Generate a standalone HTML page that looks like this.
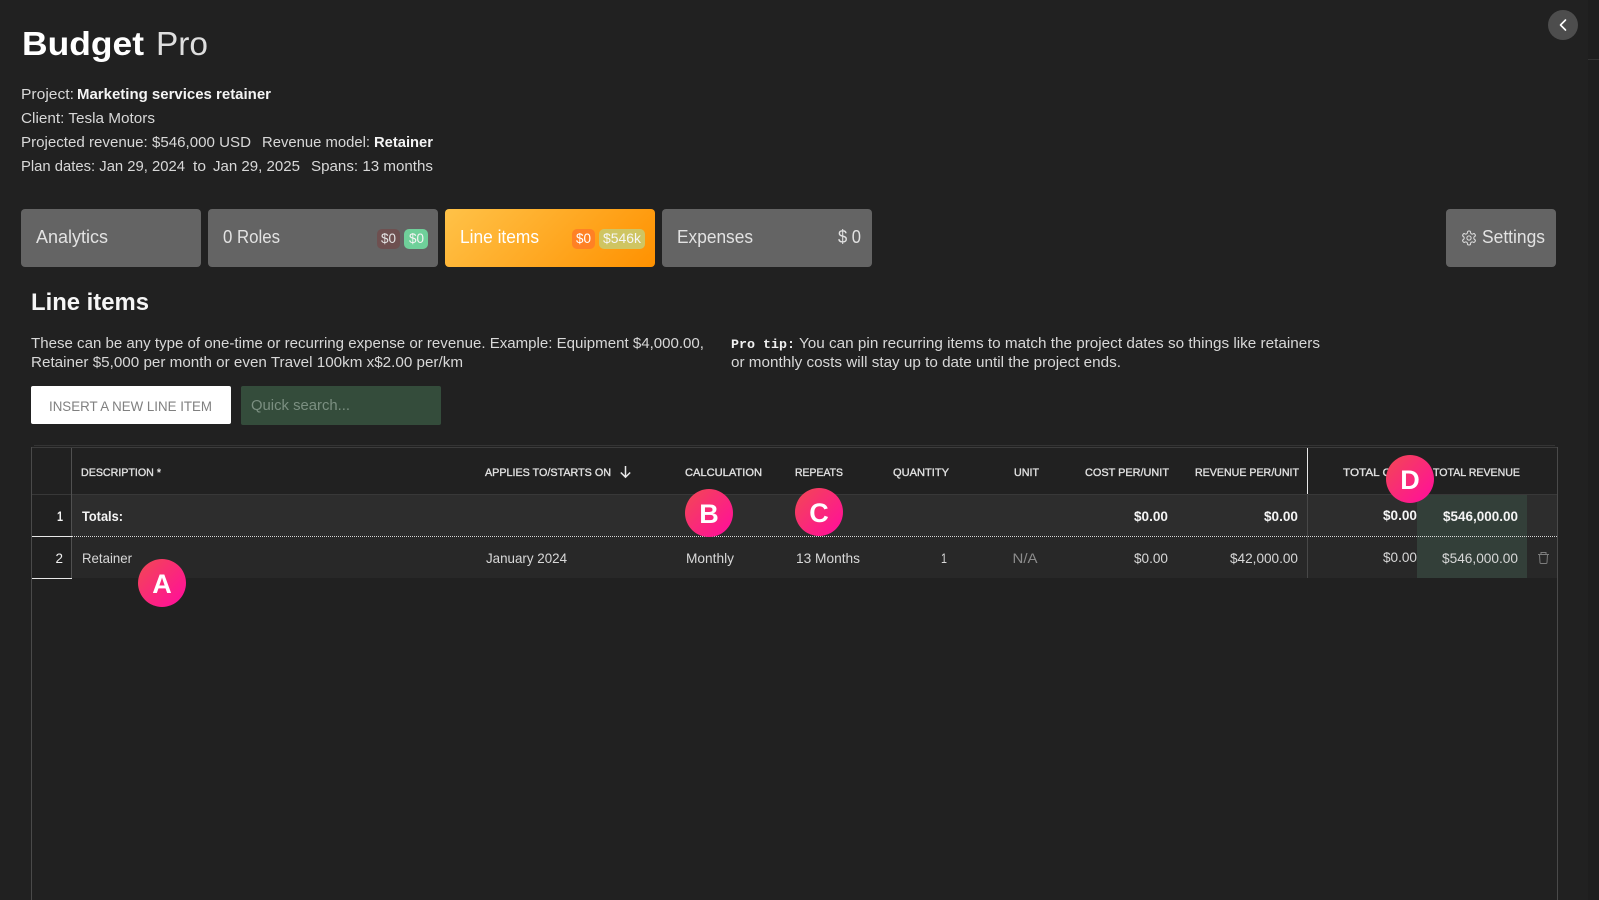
<!DOCTYPE html>
<html lang="en">
<head>
<meta charset="utf-8">
<title>Budget Pro</title>
<style>
html,body{margin:0;padding:0;background:#212121;width:1599px;height:900px;overflow:hidden}
svg{display:block}
text{font-family:"Liberation Sans",sans-serif;white-space:pre}
.m{font-size:15px;fill:#d8d8d8}
.b{font-weight:700;fill:#f4f4f4}
.tab{font-size:18px;fill:#e2e2e2}
.bd{font-size:14px;fill:#e4e4e4}
.h{font-size:11px;fill:#e0e0e0;stroke:#e0e0e0;stroke-width:.35}
.v{font-size:14px;fill:#d8d8d8}
.vb{font-size:14px;font-weight:700;fill:#f4f4f4}
.mk{font-size:27px;font-weight:700;fill:#fff;text-anchor:middle}
</style>
</head>
<body>
<svg width="1599" height="900" viewBox="0 0 1599 900" xmlns="http://www.w3.org/2000/svg">
<defs>
<linearGradient id="o" gradientUnits="userSpaceOnUse" x1="483" y1="171" x2="617" y2="305"><stop offset="0" stop-color="#ffc248"/><stop offset="1" stop-color="#ff9100"/></linearGradient>
<linearGradient id="p" x1="0.15" y1="0.15" x2="0.85" y2="0.85"><stop offset="0" stop-color="#f43f5e"/><stop offset="1" stop-color="#ff1493"/></linearGradient>
</defs>

<rect width="1599" height="900" fill="#212121"/>
<rect x="1588" y="0" width="11" height="900" fill="#1e1e1e"/>
<rect x="1588" y="59" width="11" height="1" fill="#333"/>

<!-- collapse -->
<circle cx="1563" cy="25" r="15" fill="#4d4d4d"/>
<path d="M1565.5 20 L1560.5 25 L1565.5 30" fill="none" stroke="#fff" stroke-width="1.6" stroke-linecap="round" stroke-linejoin="round"/>

<!-- title -->
<text x="22" y="55" font-size="33" font-weight="700" fill="#fff" textLength="122" lengthAdjust="spacingAndGlyphs">Budget</text>
<text x="156" y="55" font-size="33" fill="#dedede" textLength="52" lengthAdjust="spacingAndGlyphs">Pro</text>

<!-- meta -->
<text class="m" x="21" y="99" textLength="53" lengthAdjust="spacingAndGlyphs">Project:</text>
<text class="m b" x="77" y="99" textLength="194" lengthAdjust="spacingAndGlyphs">Marketing services retainer</text>
<text class="m" x="21" y="123" textLength="134" lengthAdjust="spacingAndGlyphs">Client: Tesla Motors</text>
<text class="m" x="21" y="147" textLength="230" lengthAdjust="spacingAndGlyphs">Projected revenue: $546,000 USD</text>
<text class="m" x="262" y="147" textLength="108" lengthAdjust="spacingAndGlyphs">Revenue model:</text>
<text class="m b" x="374" y="147" textLength="59" lengthAdjust="spacingAndGlyphs">Retainer</text>
<text class="m" x="21" y="171" textLength="164" lengthAdjust="spacingAndGlyphs">Plan dates: Jan 29, 2024</text>
<text class="m" x="193" y="171" textLength="13" lengthAdjust="spacingAndGlyphs">to</text>
<text class="m" x="213" y="171" textLength="87" lengthAdjust="spacingAndGlyphs">Jan 29, 2025</text>
<text class="m" x="311" y="171" textLength="122" lengthAdjust="spacingAndGlyphs">Spans: 13 months</text>

<!-- tabs -->
<rect x="21" y="209" width="180" height="58" rx="4" fill="#646464"/>
<rect x="208" y="209" width="230" height="58" rx="4" fill="#646464"/>
<rect x="445" y="209" width="210" height="58" rx="4" fill="url(#o)"/>
<rect x="662" y="209" width="210" height="58" rx="4" fill="#646464"/>
<rect x="1446" y="209" width="110" height="58" rx="4" fill="#646464"/>
<text class="tab" x="36" y="243" textLength="72" lengthAdjust="spacingAndGlyphs">Analytics</text>
<text class="tab" x="223" y="243" textLength="57" lengthAdjust="spacingAndGlyphs">0 Roles</text>
<rect x="377" y="229" width="23" height="20" rx="5" fill="#6e5050"/>
<text class="bd" x="381" y="243" textLength="15" lengthAdjust="spacingAndGlyphs">$0</text>
<rect x="404" y="229" width="24" height="20" rx="5" fill="#6fd09a"/>
<text class="bd" x="409" y="243" textLength="15" lengthAdjust="spacingAndGlyphs" style="fill:#f4f4f4">$0</text>
<text class="tab" x="460" y="243" textLength="79" lengthAdjust="spacingAndGlyphs" style="fill:#fff">Line items</text>
<rect x="572" y="229" width="23" height="20" rx="5" fill="#ff8124"/>
<text class="bd" x="576" y="243" textLength="15" lengthAdjust="spacingAndGlyphs" style="fill:#fff">$0</text>
<rect x="599" y="229" width="46" height="20" rx="5" fill="#cfc562"/>
<text class="bd" x="603" y="243" textLength="38" lengthAdjust="spacingAndGlyphs" style="fill:#f6f6f6">$546k</text>
<text class="tab" x="677" y="243" textLength="76" lengthAdjust="spacingAndGlyphs">Expenses</text>
<text class="tab" x="838" y="243" textLength="23" lengthAdjust="spacingAndGlyphs">$ 0</text>
<g transform="translate(1460.6,229.6) scale(.7)" fill="none" stroke="#dcdcdc" stroke-width="1.5" stroke-linecap="round" stroke-linejoin="round">
<path d="M12.22 2h-.44a2 2 0 0 0-2 2v.18a2 2 0 0 1-1 1.73l-.43.25a2 2 0 0 1-2 0l-.15-.08a2 2 0 0 0-2.73.73l-.22.38a2 2 0 0 0 .73 2.73l.15.1a2 2 0 0 1 1 1.72v.51a2 2 0 0 1-1 1.74l-.15.09a2 2 0 0 0-.73 2.73l.22.38a2 2 0 0 0 2.73.73l.15-.08a2 2 0 0 1 2 0l.43.25a2 2 0 0 1 1 1.73V20a2 2 0 0 0 2 2h.44a2 2 0 0 0 2-2v-.18a2 2 0 0 1 1-1.73l.43-.25a2 2 0 0 1 2 0l.15.08a2 2 0 0 0 2.73-.73l.22-.39a2 2 0 0 0-.73-2.73l-.15-.08a2 2 0 0 1-1-1.74v-.5a2 2 0 0 1 1-1.74l.15-.09a2 2 0 0 0 .73-2.73l-.22-.38a2 2 0 0 0-2.73-.73l-.15.08a2 2 0 0 1-2 0l-.43-.25a2 2 0 0 1-1-1.73V4a2 2 0 0 0-2-2z"/>
<circle cx="12" cy="12" r="3"/>
</g>
<text class="tab" x="1482" y="243" textLength="63" lengthAdjust="spacingAndGlyphs">Settings</text>

<!-- section -->
<text x="31" y="310" font-size="24" font-weight="700" fill="#f6f6f6" textLength="118" lengthAdjust="spacingAndGlyphs">Line items</text>
<text class="m" x="31" y="348" textLength="673" lengthAdjust="spacingAndGlyphs">These can be any type of one-time or recurring expense or revenue. Example: Equipment $4,000.00,</text>
<text class="m" x="31" y="367" textLength="432" lengthAdjust="spacingAndGlyphs">Retainer $5,000 per month or even Travel 100km x$2.00 per/km</text>
<text x="731" y="348" font-size="13" font-weight="700" fill="#f0f0f0" style="font-family:'Liberation Mono',monospace" textLength="64" lengthAdjust="spacingAndGlyphs">Pro tip:</text>
<text class="m" x="799" y="348" textLength="521" lengthAdjust="spacingAndGlyphs">You can pin recurring items to match the project dates so things like retainers</text>
<text class="m" x="731" y="367" textLength="390" lengthAdjust="spacingAndGlyphs">or monthly costs will stay up to date until the project ends.</text>

<!-- controls -->
<rect x="31" y="386" width="200" height="38" rx="2" fill="#fff"/>
<text x="49" y="411" font-size="14" fill="#808080" textLength="163" lengthAdjust="spacingAndGlyphs">INSERT A NEW LINE ITEM</text>
<rect x="241" y="386" width="200" height="39" rx="2" fill="#344c3b"/>
<text x="251" y="410" font-size="15" fill="#7b8f81" textLength="99" lengthAdjust="spacingAndGlyphs">Quick search...</text>

<!-- table -->
<rect x="34" y="445" width="1521" height="1" fill="#343434"/>
<rect x="72" y="495" width="1485" height="41" fill="#2d2d2d"/>
<rect x="72" y="537" width="1485" height="41" fill="#282828"/>
<rect x="1417" y="495" width="110" height="83" fill="#333f39"/>
<rect x="31" y="494" width="1526" height="1" fill="#383838"/>
<rect x="31" y="447" width="1527" height="1" fill="#3c3c3c"/>
<rect x="31" y="447" width="1" height="453" fill="#4a4a4a"/>
<rect x="1557" y="447" width="1" height="453" fill="#4a4a4a"/>
<rect x="71" y="448" width="1" height="130" fill="#505050"/>
<rect x="1307" y="448" width="1" height="46" fill="#e8e8e8"/>
<rect x="1307" y="495" width="1" height="83" fill="#484848"/>
<rect x="32" y="536" width="40" height="1" fill="#e8e8e8"/>
<rect x="32" y="578" width="40" height="1" fill="#e8e8e8"/>
<line x1="72" y1="536.5" x2="1557" y2="536.5" stroke="#d8d8d8" stroke-width="1" stroke-dasharray="1 1"/>

<!-- header -->
<text class="h" x="81" y="476" textLength="80" lengthAdjust="spacingAndGlyphs">DESCRIPTION *</text>
<text class="h" x="485" y="476" textLength="126" lengthAdjust="spacingAndGlyphs">APPLIES TO/STARTS ON</text>
<path d="M625.5 466 V477 M620.8 472.5 L625.5 477.2 L630.2 472.5" fill="none" stroke="#e8e8e8" stroke-width="1.5"/>
<text class="h" x="685" y="476" textLength="77" lengthAdjust="spacingAndGlyphs">CALCULATION</text>
<text class="h" x="795" y="476" textLength="48" lengthAdjust="spacingAndGlyphs">REPEATS</text>
<text class="h" x="893" y="476" textLength="56" lengthAdjust="spacingAndGlyphs">QUANTITY</text>
<text class="h" x="1014" y="476" textLength="25" lengthAdjust="spacingAndGlyphs">UNIT</text>
<text class="h" x="1085" y="476" textLength="84" lengthAdjust="spacingAndGlyphs">COST PER/UNIT</text>
<text class="h" x="1195" y="476" textLength="104" lengthAdjust="spacingAndGlyphs">REVENUE PER/UNIT</text>
<text class="h" x="1343" y="476" textLength="72" lengthAdjust="spacingAndGlyphs">TOTAL COST</text>
<text class="h" x="1433" y="476" textLength="87" lengthAdjust="spacingAndGlyphs">TOTAL REVENUE</text>

<!-- row 1 -->
<text class="vb" x="57" y="521" textLength="6" lengthAdjust="spacingAndGlyphs">1</text>
<text class="vb" x="82" y="521" textLength="41" lengthAdjust="spacingAndGlyphs">Totals:</text>
<text class="vb" x="1134" y="521" textLength="34" lengthAdjust="spacingAndGlyphs">$0.00</text>
<text class="vb" x="1264" y="521" textLength="34" lengthAdjust="spacingAndGlyphs">$0.00</text>
<text class="vb" x="1383" y="520" textLength="34" lengthAdjust="spacingAndGlyphs">$0.00</text>
<text class="vb" x="1443" y="521" textLength="75" lengthAdjust="spacingAndGlyphs">$546,000.00</text>

<!-- row 2 -->
<text class="v" x="55.5" y="563" textLength="7.5" lengthAdjust="spacingAndGlyphs" style="fill:#f0f0f0">2</text>
<text class="v" x="82" y="563" textLength="50" lengthAdjust="spacingAndGlyphs">Retainer</text>
<text class="v" x="486" y="563" textLength="81" lengthAdjust="spacingAndGlyphs">January 2024</text>
<text class="v" x="686" y="563" textLength="48" lengthAdjust="spacingAndGlyphs">Monthly</text>
<text class="v" x="796" y="563" textLength="64" lengthAdjust="spacingAndGlyphs">13 Months</text>
<text class="v" x="941" y="563" textLength="6" lengthAdjust="spacingAndGlyphs">1</text>
<text class="v" x="1012.5" y="563" textLength="25" lengthAdjust="spacingAndGlyphs" style="fill:#8c8c8c">N/A</text>
<text class="v" x="1134" y="563" textLength="34" lengthAdjust="spacingAndGlyphs">$0.00</text>
<text class="v" x="1230" y="563" textLength="68" lengthAdjust="spacingAndGlyphs">$42,000.00</text>
<text class="v" x="1383" y="562" textLength="34" lengthAdjust="spacingAndGlyphs">$0.00</text>
<text class="v" x="1442" y="563" textLength="76" lengthAdjust="spacingAndGlyphs">$546,000.00</text>
<g fill="none" stroke="#7c7c7c" stroke-width="1">
<path d="M1538 554.5 H1549"/>
<path d="M1539.5 554.5 L1540 562.5 Q1540.1 563.5 1541 563.5 H1546 Q1546.9 563.5 1547 562.5 L1547.5 554.5"/>
<path d="M1541 554 V552.5 H1546 V554"/>
</g>

<!-- markers -->
<circle cx="162" cy="583" r="24" fill="url(#p)"/>
<text class="mk" x="162" y="593">A</text>
<circle cx="709" cy="513" r="24" fill="url(#p)"/>
<text class="mk" x="709" y="523">B</text>
<circle cx="819" cy="512" r="24" fill="url(#p)"/>
<text class="mk" x="819" y="522">C</text>
<circle cx="1410" cy="479" r="24" fill="url(#p)"/>
<text class="mk" x="1410" y="489">D</text>
</svg>
</body>
</html>
